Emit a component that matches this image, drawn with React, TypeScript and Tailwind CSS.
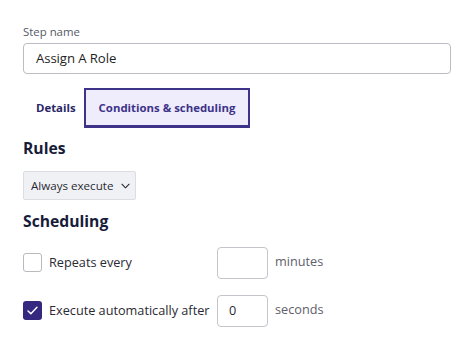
import React from 'react';

function Checkbox({ checked }: { checked?: boolean }) {
  if (checked) {
    return (
      <span className="flex h-[19px] w-[19px] shrink-0 items-center justify-center rounded-[3px] bg-[#35297f]">
        <svg width="13" height="13" viewBox="0 0 16 16" fill="none">
          <path d="M2.5 8.5l3.5 3.5 7.5-8" stroke="white" strokeWidth="1.8" strokeLinecap="round" strokeLinejoin="round" />
        </svg>
      </span>
    );
  }
  return <span className="h-[19px] w-[19px] shrink-0 rounded-[3px] border border-[#b9b9c0] bg-white" />;
}

export default function App() {
  return (
    <div
      className="h-[347px] w-[474px] bg-white pl-[23px] pr-[23px] pt-[23px] text-[#222]"
      style={{ fontFamily: '"Open Sans", "Liberation Sans", sans-serif' }}
    >
      {/* Step name */}
      <label className="block text-[11.4px] leading-[17px] text-[#555a66]">Step name</label>
      <div className="mt-[3px] flex h-[31px] w-[428px] items-center rounded-[4px] border border-[#bcbcc2] px-[12px] text-[13.2px] tracking-[-0.1px] text-[#1f1f24]">
        Assign A Role
      </div>

      {/* Tabs */}
      <div className="mt-[14px] flex h-[40px] items-stretch">
        <button className="pl-[13px] pr-[8px] text-[11.4px] font-bold text-[#2a2766]">Details</button>
        <button className="whitespace-nowrap border-2 border-b-[3px] border-[#3d3389] bg-[#efedfc] px-[13px] text-[11.4px] font-bold text-[#3d3389]">
          Conditions &amp; scheduling
        </button>
      </div>

      {/* Rules */}
      <h2 className="mt-[8px] text-[15.7px] font-bold leading-[24px] text-[#171c3a]">Rules</h2>
      <div className="mt-[11px] flex h-[29px] w-[113px] items-center gap-[8px] whitespace-nowrap rounded-[2px] border border-[#dcdde3] bg-[#f0f1f5] pl-[7px] text-[11.6px] text-[#2a2a33]">
        Always execute
        <svg width="9" height="6" viewBox="0 0 10 6" fill="none">
          <path d="M1 1l4 4 4-4" stroke="#2a2a33" strokeWidth="1.2" strokeLinecap="round" strokeLinejoin="round" />
        </svg>
      </div>

      {/* Scheduling */}
      <h2 className="mt-[9px] text-[15.7px] font-bold leading-[24px] text-[#171c3a]">Scheduling</h2>
      <div className="mt-[14px] flex flex-col gap-[16px]">
        <div className="flex items-center">
          <div className="flex w-[194px] items-center gap-[7px]">
            <Checkbox />
            <span className="whitespace-nowrap text-[12.7px] text-[#2a2a33]">Repeats every</span>
          </div>
          <div className="h-[32px] w-[51px] rounded-[4px] border border-[#c4c4ca]" />
          <span className="-mt-[3px] ml-[7px] text-[12.7px] text-[#60606a]">minutes</span>
        </div>
        <div className="flex items-center">
          <div className="flex w-[194px] items-center gap-[7px]">
            <Checkbox checked />
            <span className="whitespace-nowrap text-[12.7px] text-[#2a2a33]">Execute automatically after</span>
          </div>
          <div className="flex h-[32px] w-[51px] items-center rounded-[4px] border border-[#c4c4ca] pl-[11px] text-[12.7px] text-[#2a2a33]">
            0
          </div>
          <span className="-mt-[3px] ml-[7px] text-[12.7px] text-[#60606a]">seconds</span>
        </div>
      </div>
    </div>
  );
}
